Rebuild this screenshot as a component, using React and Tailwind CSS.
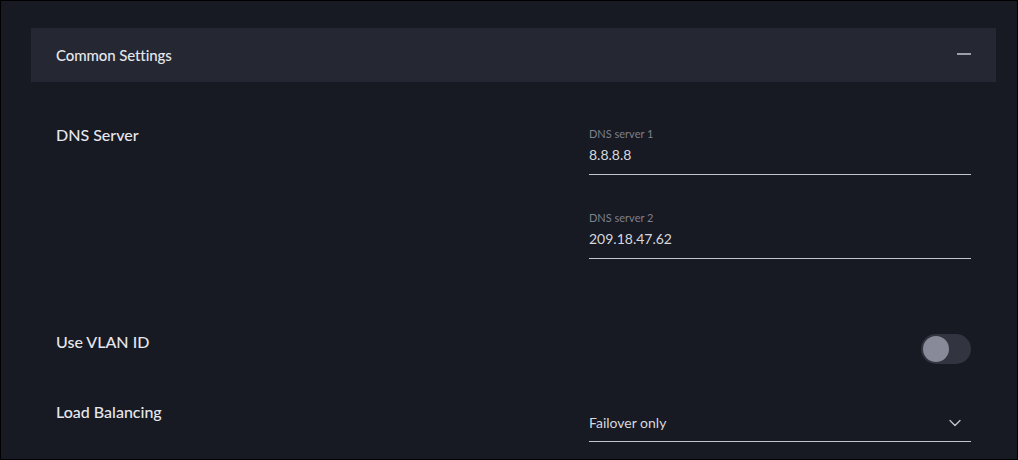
import { ChevronDown } from "lucide-react";

function Field({ label, value }) {
  return (
    <div className="border-b border-[#c4c6cd] pb-[9px]">
      <p className="text-[11px] leading-[14px] text-[#7d808e]">{label}</p>
      <p className="mt-1 text-[14px] leading-5 text-[#d6d8de]">{value}</p>
    </div>
  );
}

function Toggle() {
  return (
    <button
      type="button"
      aria-label="Use VLAN ID"
      className="flex h-[30px] w-[50px] items-center rounded-full bg-[#32343f] p-[2px]"
    >
      <span className="h-[26px] w-[26px] rounded-full bg-[#888a99]" />
    </button>
  );
}

export default function App() {
  return (
    <div className="h-[460px] overflow-hidden border border-black bg-[#171923] pl-[30px] pr-[21px] pt-[27px] font-['Lato','Liberation_Sans',sans-serif]">
      <div className="flex h-[54px] items-center justify-between bg-[#252733] px-[25px]">
        <h2 className="text-[15px] leading-6 font-medium tracking-[-0.1px] text-[#e6e7ec]">Common Settings</h2>
        <span className="mb-[2px] h-[2px] w-[14px] bg-[#9c9eab]" />
      </div>

      <div className="px-[25px]">
        <div className="mt-[41px] flex items-start justify-between">
          <h3 className="text-[16px] leading-6 font-medium text-[#e6e7ec]">DNS Server</h3>
          <div className="mt-1 flex w-[382px] flex-col gap-9">
            <Field label="DNS server 1" value="8.8.8.8" />
            <Field label="DNS server 2" value="209.18.47.62" />
          </div>
        </div>

        <div className="mt-[71px] flex items-start justify-between">
          <h3 className="text-[16px] leading-6 font-medium text-[#e6e7ec]">Use VLAN ID</h3>
          <div className="mt-1">
            <Toggle />
          </div>
        </div>

        <div className="mt-9 flex items-start justify-between">
          <h3 className="text-[16px] leading-6 font-medium text-[#e6e7ec]">Load Balancing</h3>
          <div className="mt-[13px] flex w-[382px] items-center justify-between border-b border-[#c4c6cd] pb-[8px]">
            <span className="text-[14px] leading-5 text-[#d6d8de]">Failover only</span>
            <ChevronDown size={20} strokeWidth={1.6} className="mr-[6px] text-[#c0c2cb]" />
          </div>
        </div>
      </div>
    </div>
  );
}
